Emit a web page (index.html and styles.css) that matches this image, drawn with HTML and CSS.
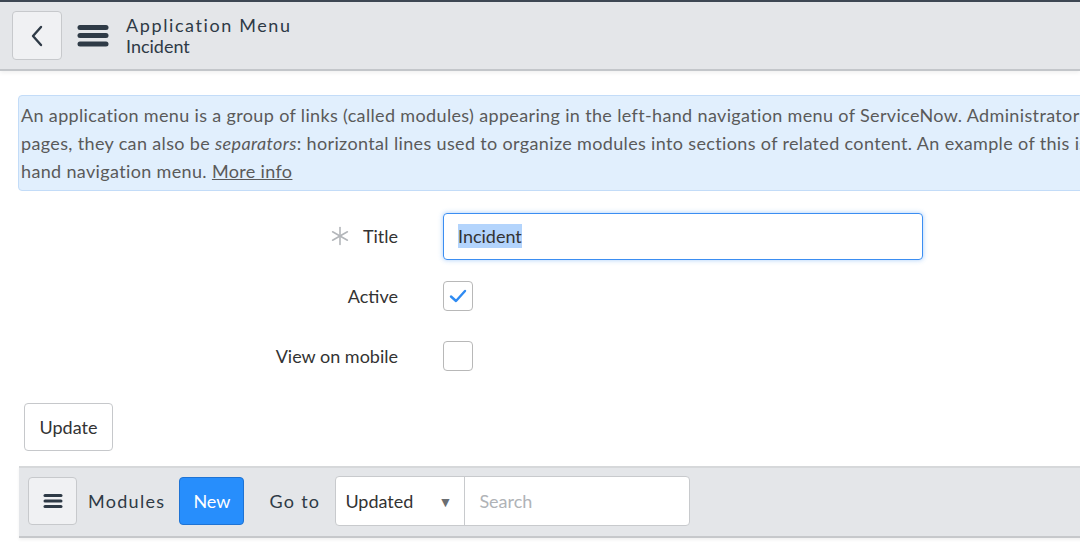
FILE: index.html
```html
<!DOCTYPE html>
<html lang="en">
<head>
<meta charset="utf-8">
<title>Application Menu - Incident</title>
<link rel="stylesheet" href="styles.css">
</head>
<body>
<header class="topbar">
  <button class="back-btn" aria-label="Back">
    <svg width="14" height="22" viewBox="0 0 14 22"><path d="M11 2 L3 11 L11 20" fill="none" stroke="#2e3a46" stroke-width="2.4" stroke-linecap="round" stroke-linejoin="round"/></svg>
  </button>
  <span class="burger" aria-hidden="true">
    <svg width="32" height="24" viewBox="0 0 32 24"><g stroke="#2e3a46" stroke-width="5" stroke-linecap="round"><line x1="3" y1="3.5" x2="29" y2="3.5"/><line x1="3" y1="11.5" x2="29" y2="11.5"/><line x1="3" y1="20" x2="29" y2="20"/></g></svg>
  </span>
  <div class="titles">
    <div class="title-main">Application Menu</div>
    <div class="title-sub">Incident</div>
  </div>
</header>

<main class="content">
  <div class="info">
    <span class="info-line">An application menu is a group of links (called modules) appearing in the left-hand navigation menu of ServiceNow. Administrators can create application menus and modules. Though modules typically open</span>
    <span class="info-line">pages, they can also be <em>separators</em>: horizontal lines used to organize modules into sections of related content. An example of this is the Self-Service section of the left-</span>
    <span class="info-line">hand navigation menu. <a href="#" class="more">More info</a></span>
  </div>

  <form class="form">
    <div class="row">
      <label class="label"><svg class="req" width="20" height="20" viewBox="0 0 20 20"><g stroke="#b3b6ba" stroke-width="1.6" stroke-linecap="round"><line x1="10" y1="1.5" x2="10" y2="18.5"/><line x1="2.6" y1="5.8" x2="17.4" y2="14.2"/><line x1="2.6" y1="14.2" x2="17.4" y2="5.8"/></g></svg>Title</label>
      <div class="ctrl"><div class="text-input focused"><span class="sel">Incident</span></div></div>
    </div>
    <div class="row">
      <label class="label">Active</label>
      <div class="ctrl">
        <span class="check">
          <svg width="20" height="16" viewBox="0 0 20 16"><path d="M3 8.5 L8 13 L17 3" fill="none" stroke="#2f8bf2" stroke-width="2.4" stroke-linecap="round" stroke-linejoin="round"/></svg>
        </span>
      </div>
    </div>
    <div class="row">
      <label class="label">View on mobile</label>
      <div class="ctrl"><span class="check"></span></div>
    </div>
  </form>

  <div class="actions">
    <button class="btn">Update</button>
  </div>

  <div class="list-bar">
    <button class="icon-btn" aria-label="Menu">
      <svg width="22" height="16" viewBox="0 0 22 16"><g stroke="#2e3a46" stroke-width="3" stroke-linecap="round"><line x1="3" y1="2.5" x2="19" y2="2.5"/><line x1="3" y1="8" x2="19" y2="8"/><line x1="3" y1="13.5" x2="19" y2="13.5"/></g></svg>
    </button>
    <span class="bar-title">Modules</span>
    <button class="btn-primary">New</button>
    <span class="goto">Go to</span>
    <div class="search-group">
      <div class="select">Updated<span class="caret">&#9660;</span></div>
      <div class="search">Search</div>
    </div>
  </div>
</main>
</body>
</html>
```

FILE: styles.css
```css
html, body {
  margin: 0;
  padding: 0;
  background: #ffffff;
  overflow: hidden;
}
body {
  font-family: Lato, "Open Sans", "Liberation Sans", sans-serif;
  color: #2e2e2e;
  width: 1080px;
  height: 545px;
}
button {
  font-family: inherit;
  cursor: pointer;
}

/* header */
.topbar {
  display: flex;
  align-items: center;
  height: 67px;
  background: #e4e6e9;
  border-top: 2px solid #3d4753;
  border-bottom: 2px solid #c3c6ca;
  box-shadow: 0 2px 4px rgba(0, 0, 0, 0.06);
  padding-left: 12px;
  box-sizing: content-box;
}
.back-btn {
  width: 50px;
  height: 49px;
  display: flex;
  align-items: center;
  justify-content: center;
  background: #f0f1f3;
  border: 1px solid #c7c9cc;
  border-radius: 4px;
  padding: 0;
}
.burger {
  display: flex;
  margin-left: 15px;
  margin-top: 1px;
}
.titles {
  margin-left: 17px;
  color: #2e3a46;
  margin-top: 1px;
}
.title-main {
  font-size: 18px;
  letter-spacing: 1.6px;
  line-height: 21px;
}
.title-sub {
  font-size: 18px;
  line-height: 21px;
}

/* content */
.content {
  padding-top: 24px;
}
.info {
  margin-left: 18px;
  width: 1200px;
  background: #e1effd;
  border: 1px solid #c3dcf8;
  border-radius: 4px;
  padding: 5px 0 5px 2px;
  font-size: 18px;
  letter-spacing: 0.35px;
  line-height: 28px;
  color: #5a5a5a;
}
.info-line {
  display: block;
  white-space: nowrap;
}
.info em {
  font-style: italic;
}
.more {
  color: #5a5a5a;
  text-decoration: underline;
}

/* form */
.form {
  margin-top: 15px;
}
.row {
  display: grid;
  grid-template-columns: 398px 1fr;
  column-gap: 45px;
  align-items: center;
  height: 60px;
}
.label {
  text-align: right;
  font-size: 18px;
  color: #333333;
  display: flex;
  justify-content: flex-end;
  align-items: center;
}
.req {
  margin-right: 13px;
}
.ctrl {
  display: flex;
  align-items: center;
}
.text-input {
  width: 464px;
  height: 45px;
  border: 1px solid #3b8ef2;
  border-radius: 4px;
  box-shadow: 0 0 5px rgba(59, 142, 242, 0.45);
  display: flex;
  align-items: center;
  padding-left: 14px;
  font-size: 18px;
  color: #333;
}
.sel {
  background: #b3d4fc;
  line-height: 24px;
}
.check {
  width: 28px;
  height: 28px;
  border: 1px solid #b8b8b8;
  border-radius: 4px;
  display: flex;
  align-items: center;
  justify-content: center;
  background: #fff;
}

/* actions */
.actions {
  padding: 17px 0 15px 24px;
}
.btn {
  height: 48px;
  width: 89px;
  padding: 0;
  background: #fff;
  border: 1px solid #c6c8cb;
  border-radius: 4px;
  font-size: 18px;
  color: #333;
}

/* list bar */
.list-bar {
  margin-left: 19px;
  width: 1150px;
  height: 66px;
  display: flex;
  align-items: center;
  background: #e4e6e9;
  border-top: 2px solid #d6d8da;
  border-bottom: 2px solid #c6c8cb;
  box-shadow: 0 2px 3px rgba(0, 0, 0, 0.06);
  padding-left: 9px;
  padding-bottom: 2px;
  box-sizing: content-box;
}
.icon-btn {
  width: 49px;
  height: 48px;
  background: #f0f1f3;
  border: 1px solid #c7c9cc;
  border-radius: 4px;
  display: flex;
  align-items: center;
  justify-content: center;
  padding: 0;
}
.bar-title {
  margin-left: 11px;
  font-size: 18px;
  letter-spacing: 1.3px;
  color: #2e3a46;
}
.btn-primary {
  margin-left: 14px;
  width: 65px;
  height: 48px;
  background: #278efc;
  border: 1px solid #1e73d4;
  border-radius: 4px;
  color: #fff;
  font-size: 18px;
  padding: 0;
}
.goto {
  margin-left: 25px;
  font-size: 18px;
  letter-spacing: 1.3px;
  color: #2e3a46;
}
.search-group {
  margin-left: 15px;
  display: flex;
  height: 48px;
  border: 1px solid #c8cacd;
  border-radius: 4px;
  background: #fff;
  overflow: hidden;
}
.select {
  width: 107px;
  display: flex;
  align-items: center;
  justify-content: space-between;
  padding: 0 12px 0 9px;
  font-size: 18px;
  color: #333;
  border-right: 1px solid #c8cacd;
}
.caret {
  color: #6b6e72;
  font-size: 14px;
}
.search {
  width: 210px;
  display: flex;
  align-items: center;
  padding-left: 14px;
  font-size: 18px;
  color: #b0b3b7;
}
```
